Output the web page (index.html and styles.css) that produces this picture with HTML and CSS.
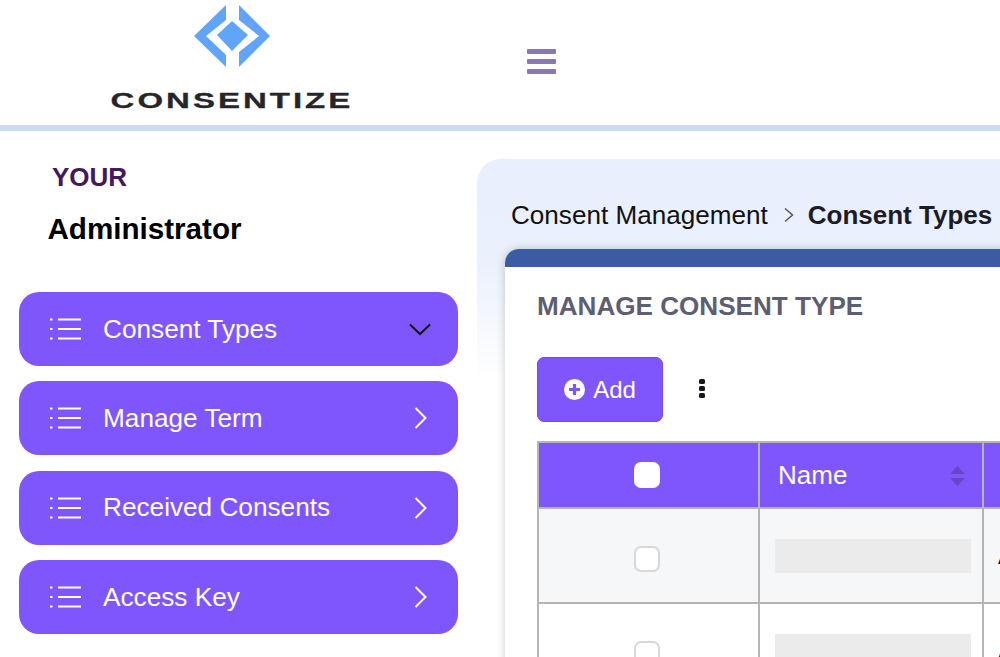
FILE: index.html
```html
<!DOCTYPE html>
<html lang="en">
<head>
    <meta charset="UTF-8">
    <meta name="viewport" content="width=device-width, initial-scale=1.0">
    <title>Consentize - Manage Consent Type</title>
    <link rel="stylesheet" href="styles.css">
</head>
<body>
    <header class="topbar">
        <div class="brand">
            <svg class="brand-mark" width="76" height="63" viewBox="0 0 76 63">
                <polygon points="0,31 32,0 32,15 12,31 32,50 32,62" fill="#60a5fa"/>
                <polygon points="45,0 76,31 45,62 45,47 65,31 45,15" fill="#60a5fa"/>
                <polygon points="23,30 38,16 54,30 38,46" fill="#60a5fa"/>
            </svg>
            <div class="brand-name">CONSENTIZE</div>
        </div>
        <div class="menu-toggle">
            <span></span>
            <span></span>
            <span></span>
        </div>
    </header>

    <div class="layout">
        <aside class="sidebar">
            <div class="role-label">YOUR</div>
            <div class="role-name">Administrator</div>
            <nav class="side-nav">
                <a class="side-item">
                    <svg class="list-icon" width="32" height="22" viewBox="0 0 32 22">
                        <path d="M9 1.500H32M9 11H32M9 20.500H32" stroke="#fff" stroke-width="1.800"/>
                        <path d="M1 1.500H3.500M1 11H3.500M1 20.500H3.500" stroke="#fff" stroke-width="1.800"/>
                    </svg>
                    <span class="side-text">Consent Types</span>
                    <svg class="chevron-down" width="22" height="13" viewBox="0 0 22 13">
                        <path d="M1 1.500L11 11L21 1.500" fill="none" stroke="#111" stroke-width="2"/>
                    </svg>
                </a>
                <a class="side-item">
                    <svg class="list-icon" width="32" height="22" viewBox="0 0 32 22">
                        <path d="M9 1.500H32M9 11H32M9 20.500H32" stroke="#fff" stroke-width="1.800"/>
                        <path d="M1 1.500H3.500M1 11H3.500M1 20.500H3.500" stroke="#fff" stroke-width="1.800"/>
                    </svg>
                    <span class="side-text">Manage Term</span>
                    <svg class="chevron-right" width="13" height="22" viewBox="0 0 13 22">
                        <path d="M1.500 1L11.500 11L1.500 21" fill="none" stroke="#fff" stroke-width="2"/>
                    </svg>
                </a>
                <a class="side-item">
                    <svg class="list-icon" width="32" height="22" viewBox="0 0 32 22">
                        <path d="M9 1.500H32M9 11H32M9 20.500H32" stroke="#fff" stroke-width="1.800"/>
                        <path d="M1 1.500H3.500M1 11H3.500M1 20.500H3.500" stroke="#fff" stroke-width="1.800"/>
                    </svg>
                    <span class="side-text">Received Consents</span>
                    <svg class="chevron-right" width="13" height="22" viewBox="0 0 13 22">
                        <path d="M1.500 1L11.500 11L1.500 21" fill="none" stroke="#fff" stroke-width="2"/>
                    </svg>
                </a>
                <a class="side-item">
                    <svg class="list-icon" width="32" height="22" viewBox="0 0 32 22">
                        <path d="M9 1.500H32M9 11H32M9 20.500H32" stroke="#fff" stroke-width="1.800"/>
                        <path d="M1 1.500H3.500M1 11H3.500M1 20.500H3.500" stroke="#fff" stroke-width="1.800"/>
                    </svg>
                    <span class="side-text">Access Key</span>
                    <svg class="chevron-right" width="13" height="22" viewBox="0 0 13 22">
                        <path d="M1.500 1L11.500 11L1.500 21" fill="none" stroke="#fff" stroke-width="2"/>
                    </svg>
                </a>
            </nav>
        </aside>

        <main class="content">
            <div class="breadcrumb">
                <span>Consent Management</span>
                <svg width="10" height="16" viewBox="0 0 10 16">
                    <path d="M1 1.500L8.500 8L1 14.500" fill="none" stroke="#555" stroke-width="1.500"/>
                </svg>
                <strong>Consent Types</strong>
            </div>

            <section class="card">
                <div class="card-bar"></div>
                <div class="card-body">
                    <h2 class="card-title">MANAGE CONSENT TYPE</h2>
                    <div class="toolbar">
                        <button class="add-btn">
                            <svg width="21" height="21" viewBox="0 0 21 21">
                                <circle cx="10.500" cy="10.500" r="10.500" fill="#fff"/>
                                <path d="M10.500 5V16M5 10.500H16" stroke="#7f56fb" stroke-width="3.200"/>
                            </svg>
                            Add
                        </button>
                        <div class="more-dots">
                            <span></span>
                            <span></span>
                            <span></span>
                        </div>
                    </div>

                    <table class="data-table">
                        <thead>
                            <tr>
                                <th class="col-check"><span class="check check-head"></span></th>
                                <th class="col-name">
                                    <div class="th-inner">
                                        Name
                                        <svg width="15" height="20" viewBox="0 0 15 20">
                                            <path d="M7.500 0L15 8H0Z" fill="#6a45c9"/>
                                            <path d="M7.500 20L15 12H0Z" fill="#6a45c9"/>
                                        </svg>
                                    </div>
                                </th>
                                <th class="col-rest"></th>
                            </tr>
                        </thead>
                        <tbody>
                            <tr class="row-alt">
                                <td><span class="check check-row"></span></td>
                                <td><div class="skeleton"></div></td>
                                <td class="cell-text">Active</td>
                            </tr>
                            <tr>
                                <td><span class="check check-row"></span></td>
                                <td><div class="skeleton"></div></td>
                                <td class="cell-text">Active</td>
                            </tr>
                        </tbody>
                    </table>
                </div>
            </section>
        </main>
    </div>
</body>
</html>
```

FILE: styles.css
```css
/* Overall Page */
html, body {
    height: 100%;
}

body {
    margin: 0;
    font-family: "Liberation Sans", Arial, sans-serif;
    background: #fff;
    color: #111;
    overflow: hidden;
}

/* Top Bar */
.topbar {
    display: flex;
    height: 125px;
    border-bottom: 6px solid #cddbf5;
}

.brand {
    width: 463px;
    display: flex;
    flex-direction: column;
    align-items: center;
}

.brand-mark {
    display: block;
    margin-top: 5px;
}

.brand-name {
    margin-top: 23px;
    font-size: 22px;
    line-height: 20px;
    font-weight: bold;
    letter-spacing: 2px;
    color: #26262a;
    -webkit-text-stroke: 0.3px #26262a;
    transform: scaleX(1.5);
}

.menu-toggle {
    width: 29px;
    margin: 49px 0 0 64px;
    display: flex;
    flex-direction: column;
    gap: 5px;
}

.menu-toggle span {
    height: 5px;
    border-radius: 1px;
    background: #8a78b0;
}

/* Sidebar */
.layout {
    display: flex;
}

.sidebar {
    width: 439px;
    padding: 0 19px;
    flex-shrink: 0;
}

.role-label {
    margin: 31px 0 0 33px;
    font-size: 26px;
    line-height: 30px;
    font-weight: bold;
    color: #42185f;
}

.role-name {
    margin: 20px 0 0 28.500px;
    font-size: 29.600px;
    line-height: 34px;
    font-weight: bold;
    color: #000;
}

.side-nav {
    margin-top: 46px;
    display: flex;
    flex-direction: column;
    gap: 15.400px;
}

.side-item {
    height: 74px;
    box-sizing: border-box;
    padding: 0 31px 0 30px;
    display: flex;
    align-items: center;
    border-radius: 20px;
    background: #7f56fb;
    color: #fff;
}

.side-text {
    margin-left: 22px;
    flex: 1;
    font-size: 26.200px;
}

.chevron-down {
    margin-right: -4px;
}

/* Content */
.content {
    flex: 1;
    min-width: 0;
    margin-top: 28px;
    padding-left: 28px;
    height: 500px;
    border-radius: 24px 0 0 0;
    background: linear-gradient(180deg, #e9effc 0%, #eaf0fc 20%, #ffffff 44%);
}

.breadcrumb {
    height: 90px;
    display: flex;
    align-items: center;
    gap: 16px;
    margin-left: 6px;
    padding: 24px 0 2px;
    box-sizing: border-box;
    font-size: 26.100px;
    white-space: nowrap;
}

.breadcrumb strong {
    margin-left: -2px;
    font-size: 26px;
    color: #1c1c28;
}

/* Card */
.card {
    width: 760px;
    height: 420px;
    border-radius: 14px 14px 0 0;
    background: #fff;
    box-shadow: 0 0 10px rgba(0, 0, 0, 0.2);
}

.card-bar {
    height: 18px;
    border-radius: 14px 14px 0 0;
    background: #3b5ca3;
}

.card-body {
    padding-left: 32px;
}

.card-title {
    margin: 24px 0 0;
    font-size: 26.100px;
    line-height: 30px;
    color: #5e5e72;
}

.toolbar {
    margin-top: 36px;
    display: flex;
    align-items: center;
}

.add-btn {
    width: 126px;
    height: 65px;
    padding: 0;
    display: flex;
    align-items: center;
    justify-content: center;
    gap: 8px;
    border: 1px solid #7446fb;
    border-radius: 7px;
    background: #7f56fb;
    color: #fff;
    font-family: inherit;
    font-size: 24px;
}

.more-dots {
    margin: 0 0 3px 36px;
    display: flex;
    flex-direction: column;
    gap: 2px;
}

.more-dots span {
    width: 6px;
    height: 5px;
    border-radius: 1.500px;
    background: #17171f;
}

/* Table */
.data-table {
    margin-top: 19px;
    width: 722px;
    table-layout: fixed;
    border-collapse: collapse;
}

.data-table th,
.data-table td {
    border: 2px solid #b5b5b5;
    padding: 0;
    text-align: center;
}

.col-check {
    width: 219px;
}

.col-name {
    width: 222px;
}

.data-table thead tr {
    height: 66px;
    background: #7f56fb;
}

.data-table tbody tr {
    height: 95px;
}

.row-alt {
    background: #f6f7f9;
}

.th-inner {
    display: flex;
    align-items: center;
    justify-content: space-between;
    padding: 1px 17px 0 18px;
    font-size: 26px;
    font-weight: normal;
    color: #fff;
}

.check {
    display: inline-block;
    width: 26px;
    height: 26px;
    margin-right: 4px;
    box-sizing: border-box;
    vertical-align: middle;
    border: 2px solid #d8d8d8;
    border-radius: 7px;
    background: #fff;
}

.check-head {
    border-color: #fff;
}

.check-row {
    margin-top: 6px;
}

.skeleton {
    height: 34px;
    margin: 0 11px 0 15px;
    background: #ebebeb;
}

.data-table .cell-text {
    padding-left: 14px;
    text-align: left;
    font-size: 25px;
}
```
